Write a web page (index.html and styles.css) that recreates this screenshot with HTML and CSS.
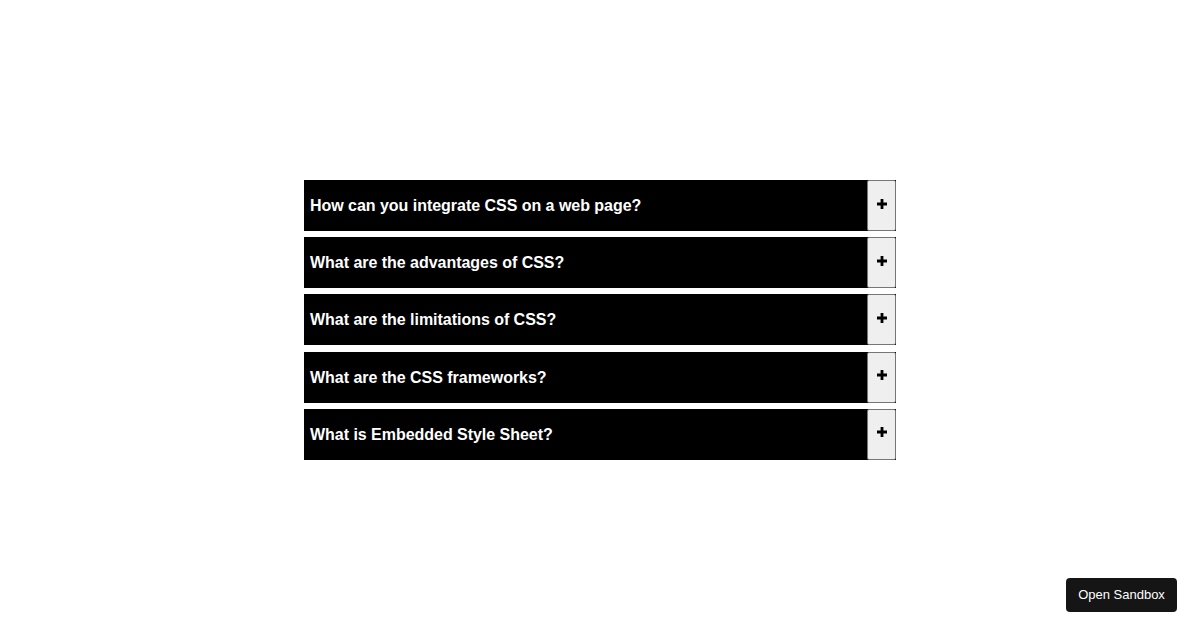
FILE: index.html
```html
<!DOCTYPE html>
<html>
<head>
<meta charset="utf-8">
<link rel="stylesheet" href="styles.css">
</head>
<body>
<main class="page">
  <section class="faq">
    <div class="item"><div class="question">How can you integrate CSS on a web page?</div><button class="toggle"><svg viewBox="0 0 10 10" width="10" height="10"><path d="M3.6 0h2.8v3.6H10v2.8H6.4V10H3.6V6.4H0V3.6h3.6z"/></svg></button></div>
    <div class="item"><div class="question">What are the advantages of CSS?</div><button class="toggle"><svg viewBox="0 0 10 10" width="10" height="10"><path d="M3.6 0h2.8v3.6H10v2.8H6.4V10H3.6V6.4H0V3.6h3.6z"/></svg></button></div>
    <div class="item"><div class="question">What are the limitations of CSS?</div><button class="toggle"><svg viewBox="0 0 10 10" width="10" height="10"><path d="M3.6 0h2.8v3.6H10v2.8H6.4V10H3.6V6.4H0V3.6h3.6z"/></svg></button></div>
    <div class="item"><div class="question">What are the CSS frameworks?</div><button class="toggle"><svg viewBox="0 0 10 10" width="10" height="10"><path d="M3.6 0h2.8v3.6H10v2.8H6.4V10H3.6V6.4H0V3.6h3.6z"/></svg></button></div>
    <div class="item"><div class="question">What is Embedded Style Sheet?</div><button class="toggle"><svg viewBox="0 0 10 10" width="10" height="10"><path d="M3.6 0h2.8v3.6H10v2.8H6.4V10H3.6V6.4H0V3.6h3.6z"/></svg></button></div>
  </section>
</main>
<a class="sandbox">Open Sandbox</a>
</body>
</html>
```
FILE: styles.css
```css
html, body {
  margin: 0;
  padding: 0;
  background: #ffffff;
  font-family: "Liberation Sans", Arial, sans-serif;
}
.page {
  height: 630px;
  display: flex;
  flex-direction: column;
  align-items: center;
  padding-top: 180px;
  box-sizing: border-box;
}
.faq {
  width: 592px;
  display: flex;
  flex-direction: column;
  gap: 6.2px;
}
.item {
  display: flex;
  height: 51px;
  background: #000000;
}
.question {
  flex: 1;
  display: flex;
  align-items: center;
  padding-left: 6px;
  color: #ffffff;
  font-weight: bold;
  font-size: 16px;
  letter-spacing: -0.03px;
  padding-top: 1px;
}
.toggle {
  width: 29px;
  height: 51px;
  margin: 0;
  padding: 0 0 4px 0;
  background: #efefef;
  border: 1px solid #767676;
  border-radius: 2px;
  display: flex;
  align-items: center;
  justify-content: center;
}
.toggle svg {
  fill: #000000;
  display: block;
}
.sandbox {
  position: fixed;
  right: 23px;
  bottom: 18px;
  width: 111px;
  height: 34px;
  box-sizing: border-box;
  padding-bottom: 2px;
  background: #151515;
  color: #ffffff;
  border-radius: 4px;
  font-size: 13px;
  display: flex;
  align-items: center;
  justify-content: center;
}
```
